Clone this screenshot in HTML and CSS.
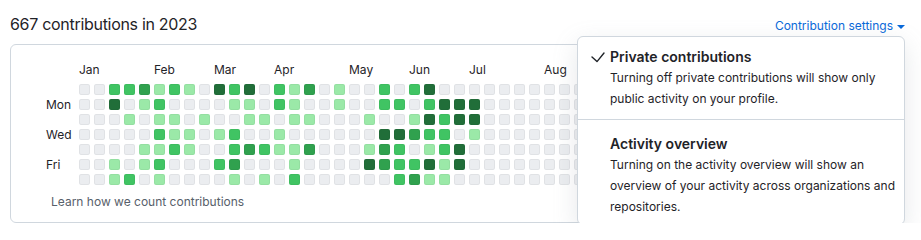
FILE: index.html
```html
<!DOCTYPE HTML>
<html lang="en">
  <head>
    <title>Contributions</title>
    <meta charset="utf-8" />
    <link rel="stylesheet" href="styles.css">
  </head>
  <body>
    <div class='page'>
      <div class='header'>
        <h2 class='title'>667 contributions in 2023</h2>
        <span class='settings'>Contribution settings<span class='caret'></span></span>
        <div class='menu'>
          <div class='menu-item'>
            <span class='menu-icon'>
              <svg width='14' height='11' viewBox='0 0 14 11'>
                <polyline points='1,5 6,9.6 13,1' fill='none' stroke='#1f2328' stroke-width='1.4' stroke-linecap='round' stroke-linejoin='round' />
              </svg>
            </span>
            <div class='menu-text'>
              <div class='menu-title'>Private contributions</div>
              <div class='menu-desc'>Turning off private contributions will show only public activity on your profile.</div>
            </div>
          </div>
          <div class='menu-item'>
            <span class='menu-icon'></span>
            <div class='menu-text'>
              <div class='menu-title'>Activity overview</div>
              <div class='menu-desc'>Turning on the activity overview will show an overview of your activity across organizations and repositories.</div>
            </div>
          </div>
        </div>
      </div>

      <div class='graph'>
        <div class='graph-body'>
          <div class='days'>
            <span></span><span>Mon</span><span></span><span>Wed</span><span></span><span>Fri</span><span></span>
          </div>
          <div class='calendar'>
            <div class='months'></div>
            <div class='cells'></div>
          </div>
        </div>
        <div class='footer'>Learn how we count contributions</div>
      </div>
    </div>

    <script>
      const $months = document.querySelector('.months');
      const $cells = document.querySelector('.cells');

      // the later months sit under the open menu
      const months = [
        ['Jan', 1], ['Feb', 6], ['Mar', 10], ['Apr', 14],
        ['May', 19], ['Jun', 23], ['Jul', 27], ['Aug', 32]
      ];
      for (const [name, col] of months) {
        const label = document.createElement('span');
        label.classList.add('month');
        label.innerText = name;
        label.style.gridColumn = col;
        $months.appendChild(label);
      }

      // one string per weekday, one digit per week (0-4 = level)
      const rows = [
        '002231210424' + '021301002024' + '0000000000',
        '004012000011' + '021001002202' + '4440000000',
        '000101101001' + '101100010014' + '2440000000',
        '000002110120' + '010000004432' + '2010000000',
        '000011210023' + '211300013201' + '2400000000',
        '001012000230' + '001000043224' + '1400000000',
        '001201000010' + '102000000231' + '1000000000'
      ];
      for (let week = 0; week < 53; week++) {
        for (let day = 0; day < 7; day++) {
          const cell = document.createElement('div');
          cell.classList.add('cell', 'level-' + (rows[day][week] || '0'));
          $cells.appendChild(cell);
        }
      }
    </script>
  </body>
</html>
```

FILE: styles.css
```css
body {
  margin: 0;
  font-family: Inter, "Liberation Sans", Arial, sans-serif;
  color: #1f2328;
  background-color: #ffffff;
}

.page {
  width: 895px;
  padding: 12px 0 0 10px;
}

.header {
  position: relative;
  display: flex;
  align-items: baseline;
  justify-content: space-between;
  margin-bottom: 8px;
}

.title {
  margin: 0;
  font-size: 16px;
  font-weight: 400;
  line-height: 24px;
  letter-spacing: -0.3px;
}

.settings {
  font-size: 12px;
  color: #0969da;
}

.caret {
  display: inline-block;
  width: 0;
  height: 0;
  margin-left: 4px;
  border-top: 4px solid #0969da;
  border-left: 4px solid transparent;
  border-right: 4px solid transparent;
  vertical-align: middle;
}

.menu {
  position: absolute;
  top: 24px;
  right: 0;
  z-index: 1;
  width: 328px;
  box-sizing: border-box;
  background-color: #ffffff;
  border: 1px solid #d0d7de;
  border-radius: 6px;
  box-shadow: 0 8px 24px rgba(140, 149, 159, 0.22);
}

.menu-item {
  display: flex;
  padding: 9px 8px 10px 13px;
}

.menu-item + .menu-item {
  border-top: 1px solid #d0d7de;
  padding: 13px 8px 7px 13px;
}

.menu-icon {
  flex: none;
  width: 19px;
}

.menu-icon svg {
  display: block;
  margin-top: 6px;
}

.menu-title {
  font-size: 14px;
  font-weight: 600;
  line-height: 21px;
}

.menu-desc {
  font-size: 12px;
  line-height: 21px;
}

.graph {
  border: 1px solid #d0d7de;
  border-radius: 6px;
  padding: 15px 0 11px 35px;
  overflow: hidden;
}

.graph-body {
  display: flex;
}

.days {
  flex: none;
  width: 33px;
  display: grid;
  grid-template-rows: repeat(7, 11px);
  row-gap: 4px;
  margin-top: 24px;
  font-size: 12px;
  line-height: 11px;
}

.months {
  display: grid;
  grid-template-columns: repeat(53, 11px);
  column-gap: 4px;
  height: 20px;
  margin-bottom: 4px;
  font-size: 12px;
  line-height: 20px;
}

.month {
  grid-row: 1;
  white-space: nowrap;
}

.cells {
  display: grid;
  grid-template-rows: repeat(7, 11px);
  grid-auto-flow: column;
  grid-auto-columns: 11px;
  gap: 4px;
}

.cell {
  border-radius: 2px;
  outline: 1px solid rgba(27, 31, 35, 0.05);
  outline-offset: -1px;
}

.level-0 { background-color: #ebedf0; }
.level-1 { background-color: #9be9a8; }
.level-2 { background-color: #40c463; }
.level-3 { background-color: #30a14e; }
.level-4 { background-color: #216e39; }

.footer {
  margin: 8px 0 0 5px;
  font-size: 12px;
  line-height: 18px;
  color: #57606a;
}
```
